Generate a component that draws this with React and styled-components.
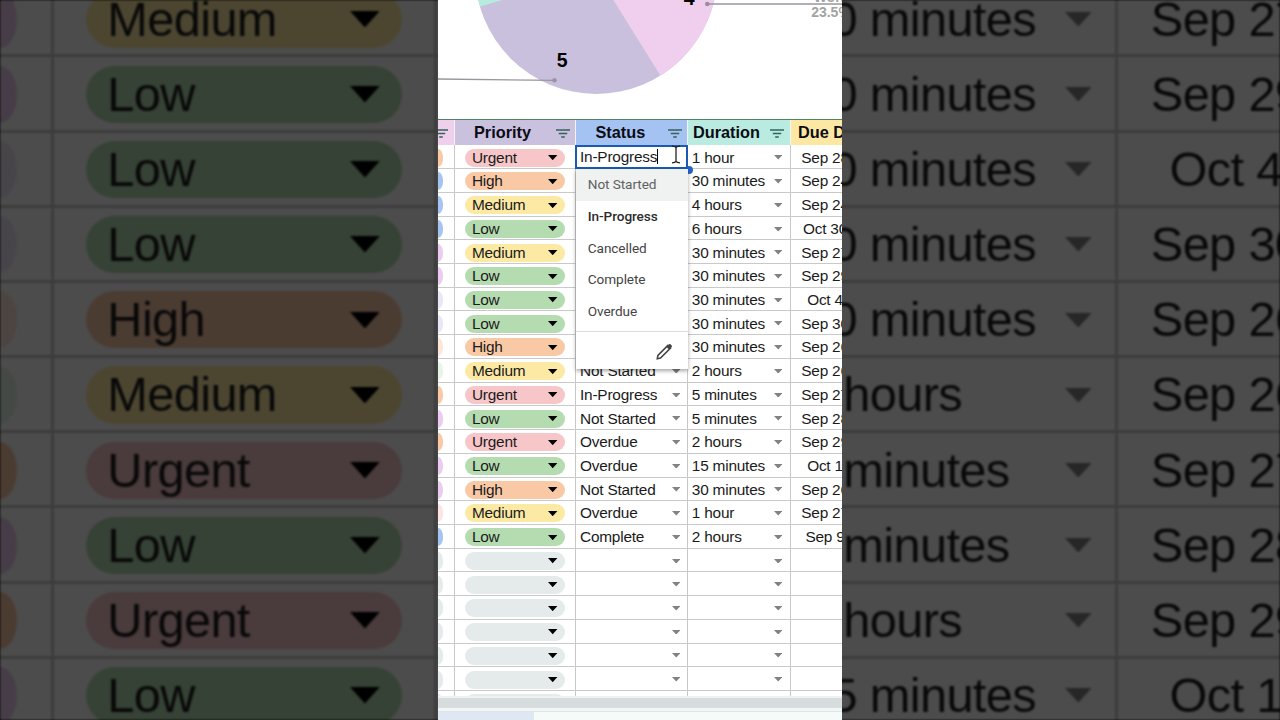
import React from 'react'
import styled, { createGlobalStyle } from 'styled-components'


const PEACH = '#f9c9a6'
const BLUE = '#a7c3f2'
const MAUVE = '#eccbf0'
const LAVENDER = '#ebe6f7'
const GREY = '#e5eaea'

const priorityColors = {
    Urgent: '#f7c6c9',
    High: '#f9c9a6',
    Medium: '#fce9a4',
    Low: '#b5dcb0',
}

const tasks = [
    { tag: PEACH, priority: "Urgent", status: "", duration: "1 hour", due: "Sep 28", editing: true },
    { tag: BLUE, priority: "High", status: "", duration: "30 minutes", due: "Sep 24" },
    { tag: BLUE, priority: "Medium", status: "", duration: "4 hours", due: "Sep 24" },
    { tag: BLUE, priority: "Low", status: "", duration: "6 hours", due: "Oct 30" },
    { tag: MAUVE, priority: "Medium", status: "", duration: "30 minutes", due: "Sep 27" },
    { tag: MAUVE, priority: "Low", status: "", duration: "30 minutes", due: "Sep 29" },
    { tag: LAVENDER, priority: "Low", status: "", duration: "30 minutes", due: "Oct 4" },
    { tag: LAVENDER, priority: "Low", status: "", duration: "30 minutes", due: "Sep 30" },
    { tag: '#fde6d8', priority: "High", status: "", duration: "30 minutes", due: "Sep 26" },
    { tag: '#e6f3e5', priority: "Medium", status: "Not Started", duration: "2 hours", due: "Sep 26" },
    { tag: PEACH, priority: "Urgent", status: "In-Progress", duration: "5 minutes", due: "Sep 27" },
    { tag: MAUVE, priority: "Low", status: "Not Started", duration: "5 minutes", due: "Sep 28" },
    { tag: PEACH, priority: "Urgent", status: "Overdue", duration: "2 hours", due: "Sep 29" },
    { tag: MAUVE, priority: "Low", status: "Overdue", duration: "15 minutes", due: "Oct 1" },
    { tag: MAUVE, priority: "High", status: "Not Started", duration: "30 minutes", due: "Sep 26" },
    { tag: '#fde3e3', priority: "Medium", status: "Overdue", duration: "1 hour", due: "Sep 27" },
    { tag: BLUE, priority: "Low", status: "Complete", duration: "2 hours", due: "Sep 9" },
]

const emptyRows = Array.from({ length: 7 }, () => ({ tag: GREY, priority: "", status: "", duration: "", due: "" }))

// the enlarged rows behind the sheet, their status column is always covered
const backdropRows = tasks.slice(4, 14).map(task => ({ ...task, status: "" }))

const statusOptions = ["Not Started", "In-Progress", "Cancelled", "Complete", "Overdue"]

const Arrow = ({ dark }) => (
    <ArrowSvg $dark={dark} viewBox="0 0 10 5" preserveAspectRatio="none">
        <path d="M0 0H10L5 5Z" />
    </ArrowSvg>
)

const FilterIcon = () => (
    <FilterSvg viewBox="0 0 14 9">
        <path d="M0 1H14M2.8 4.5H11.2M5.2 8H8.8" />
    </FilterSvg>
)

const PieChart = () => (
    <Chart viewBox="0 0 404 119">
        <circle cx="158.3" cy="-27.3" r="121.2" fill="#c9c0dd" />
        <path d="M158.3 -27.3L222.4 75.5A121.2 121.2 0 0 0 279.5 -27.3Z" fill="#efcfed" />
        <path d="M158.3 -27.3L42.2 6.5A121.2 121.2 0 0 1 37.1 -27.3Z" fill="#b7ebe0" />
        <path d="M0 79L116.5 80.3M269 4H404" stroke="#9b959e" strokeWidth="1.3" />
        <circle cx="116.5" cy="80.3" r="2.3" fill="#9a93a5" />
        <circle cx="269.3" cy="4" r="2.3" fill="#9a8f9c" />
        <SliceCount x="118.8" y="66.7">5</SliceCount>
        <SliceCount x="245.7" y="5.4">4</SliceCount>
        <SliceLabel x="393" y="1.5">Work</SliceLabel>
        <SliceLabel x="393" y="17.3">23.5%</SliceLabel>
    </Chart>
)

const StatusEditor = () => (
    <Editor>
        <Handle />
        <Input>
            In-Progress<Caret />
        </Input>
        <Pointer viewBox="0 0 10 19">
            <path d="M1 1.2Q4.2 1.2 5 2.6Q5.8 1.2 9 1.2M5 2.6V16.4M1 17.8Q4.2 17.8 5 16.4Q5.8 17.8 9 17.8" />
        </Pointer>
        <Menu>
            {statusOptions.map((option, i) => (
                <Option key={option} $hovered={i === 0} $current={option === "In-Progress"}>{option}</Option>
            ))}
            <MenuFooter>
                <Pencil viewBox="0 0 18 18">
                    <path d="M1.4 16.6L2 13.2L12.6 2.6L15.4 5.4L4.8 16Z" />
                    <path className="tip" d="M11 4.2L13.8 1.4Q14.6 .7 15.4 1.4L16.6 2.6Q17.3 3.4 16.6 4.2L13.8 7Z" />
                </Pencil>
            </MenuFooter>
        </Menu>
    </Editor>
)

const Rows = ({ rows }) => rows.map((task, i) => (
    <Row key={"row" + i}>
        <Cell><Tag $color={task.tag} /></Cell>
        <Cell>
            <Pill $color={priorityColors[task.priority] || GREY}>
                <span>{task.priority}</span>
                <Arrow dark />
            </Pill>
        </Cell>
        <Cell $left="4px" $right="7.1px">
            <span>{task.status}</span>
            <Arrow />
            {task.editing && <StatusEditor />}
        </Cell>
        <Cell $left="3.8px" $right="7.6px">
            <span>{task.duration}</span>
            <Arrow />
        </Cell>
        <DueCell>{task.due}</DueCell>
    </Row>
))

const App = () => (
    <Stage>
        <GlobalStyle />
        <Backdrop aria-hidden="true">
            <Enlarged><Rows rows={backdropRows} /></Enlarged>
        </Backdrop>
        <Sheet>
            <PieChart />
            <Header>
                <HeaderCell $color="#f0cfed" $right="6px" $end><FilterIcon /></HeaderCell>
                <HeaderCell $color="#c9c1de" $left="19px" $right="4.6px">Priority<FilterIcon /></HeaderCell>
                <HeaderCell $color="#a4c3f3" $left="19.5px" $right="5.2px">Status<FilterIcon /></HeaderCell>
                <HeaderCell $color="#b9ebe1" $left="5px" $right="5.8px">Duration<FilterIcon /></HeaderCell>
                <HeaderCell $color="#fde8a3" $left="7px">Due Date</HeaderCell>
            </Header>
            <Body><Rows rows={[...tasks, ...emptyRows]} /></Body>
            <ScrollTrack />
            <TabBar><ActiveTab /></TabBar>
        </Sheet>
    </Stage>
)

export default App


const GlobalStyle = createGlobalStyle`
    body {
        margin: 0;
        background: #000;
        overflow: hidden;
    }
    * {
        box-sizing: border-box;
    }
`
const Stage = styled.div`
    display: grid;
    width: 1280px;
    height: 720px;
    justify-items: center;
    align-items: start;
    overflow: hidden;
    font-family: "Liberation Sans", Arial, sans-serif;
    color: #1b1b1b;
`
const Backdrop = styled.div`
    grid-area: 1 / 1;
    width: 1280px;
    height: 720px;
    overflow: hidden;
    background: #fff;
    filter: brightness(0.3) blur(0.8px);
`
const Sheet = styled.div`
    grid-area: 1 / 1;
    z-index: 1;
    display: flex;
    flex-direction: column;
    width: 404px;
    height: 720px;
    overflow: hidden;
    background: #fff;
`
const Chart = styled.svg`
    display: block;
    flex: none;
    width: 404px;
    height: 119px;
`
const SliceCount = styled.text`
    font-size: 19.5px;
    font-weight: bold;
    fill: #000;
`
const SliceLabel = styled.text`
    font-size: 14px;
    font-weight: bold;
    fill: #a3a3a3;
    text-anchor: middle;
`
const Header = styled.div`
    display: grid;
    grid-template-columns: 17px 121px 112px 103px 69px;
    flex: none;
    height: 26.45px;
    border-top: 1px solid #4d8560;
`
const HeaderCell = styled.div`
    display: flex;
    align-items: center;
    justify-content: ${p => p.$end ? 'flex-end' : 'space-between'};
    min-width: 0;
    overflow: hidden;
    padding-left: ${p => p.$left || 0};
    padding-right: ${p => p.$right || 0};
    border-right: 1px solid #f4f4f8;
    background: ${p => p.$color};
    color: #0c0c14;
    font-size: 16.3px;
    font-weight: bold;
    white-space: nowrap;
`
const FilterSvg = styled.svg`
    flex: none;
    width: 14px;
    height: 9px;
    margin-top: 2px;
    fill: none;
    stroke: #35625c;
    stroke-width: 1.3;
`
const Body = styled.div`
    flex: none;
    height: 550.75px;
    overflow: hidden;
`
const Row = styled.div`
    display: grid;
    grid-template-columns: 17px 121px 112px 103px 69px;
    height: 23.73px;
    font-size: 15.4px;
    letter-spacing: -0.21px;
    line-height: 18px;
    white-space: nowrap;
`
const Cell = styled.div`
    position: relative;
    display: flex;
    align-items: center;
    justify-content: space-between;
    min-width: 0;
    padding: 1.8px ${p => p.$right || 0} 0 ${p => p.$left || 0};
    border-right: 1px solid #c9c9c9;
    border-bottom: 1px solid #c9c9c9;
`
const DueCell = styled(Cell)`
    justify-content: center;
`
const Enlarged = styled.div`
    width: 404px;
    margin-top: -5.6px;
    zoom: 3.168;
    ${Cell} {
        padding-top: 0.5px;
    }
`
const Tag = styled.div`
    width: 5.4px;
    height: 18px;
    border-radius: 0 5.4px 5.4px 0 / 0 9px 9px 0;
    background: ${p => p.$color};
`
const Pill = styled.div`
    display: flex;
    align-items: center;
    justify-content: space-between;
    width: 100px;
    height: 18px;
    margin-left: 10px;
    padding: 0 7.2px 0 6.9px;
    border-radius: 9px;
    background: ${p => p.$color};
`
const ArrowSvg = styled.svg`
    flex: none;
    width: ${p => p.$dark ? '9.4px' : '8.4px'};
    height: ${p => p.$dark ? '5.2px' : '4.6px'};
    fill: ${p => p.$dark ? '#000' : '#828282'};
`
const Editor = styled.div`
    position: absolute;
    top: -0.45px;
    left: -1px;
    z-index: 2;
    width: 113px;
`
const Input = styled.div`
    display: flex;
    align-items: center;
    height: 24px;
    padding: 0 0 1px 3px;
    border: 2px solid #1a5ab5;
    background: #fff;
    position: relative;
`
const Caret = styled.span`
    width: 1px;
    height: 15px;
    background: #000;
`
const Handle = styled.div`
    position: absolute;
    top: 20.5px;
    right: -4.5px;
    width: 8px;
    height: 8px;
    border-radius: 50%;
    background: #2763c4;
`
const Pointer = styled.svg`
    position: absolute;
    top: 0;
    left: 96px;
    width: 10px;
    height: 19px;
    fill: none;
    stroke: #222;
    stroke-width: 1.3;
`
const Menu = styled.div`
    position: relative;
    width: 111.5px;
    height: 200px;
    margin-left: 1px;
    background: #fff;
    box-shadow: 0 2px 4px rgba(0, 0, 0, 0.35);
    font-family: Roboto, sans-serif;
    font-size: 13.6px;
    letter-spacing: -0.08px;
`
const Option = styled.div`
    display: flex;
    align-items: center;
    height: 31.7px;
    padding: 0 0 1px 11.8px;
    background: ${p => p.$hovered ? '#eff2f1' : '#fff'};
    color: ${p => p.$hovered ? '#5f6162' : p.$current ? '#2c2c2c' : '#444'};
    font-weight: ${p => p.$current ? 500 : 400};
`
const MenuFooter = styled.div`
    display: flex;
    align-items: center;
    justify-content: flex-end;
    height: 38px;
    margin-top: 3.5px;
    padding: 3px 15px 0 0;
    border-top: 1px solid #dcdcdc;
`
const Pencil = styled.svg`
    width: 17px;
    height: 17px;
    fill: none;
    stroke: #444;
    stroke-width: 1.7;
    .tip {
        fill: #444;
        stroke: none;
    }
`
const ScrollTrack = styled.div`
    flex: none;
    height: 15px;
    border-top: 2.5px solid #eff2f2;
    border-bottom: 3px solid #f1f5f5;
    background: #d7dddd;
`
const TabBar = styled.div`
    display: flex;
    flex: 1;
    border-top: 1px solid #dfe5e6;
    background: #f5fbf9;
`
const ActiveTab = styled.div`
    width: 96px;
    background: #dfe7f2;
`
